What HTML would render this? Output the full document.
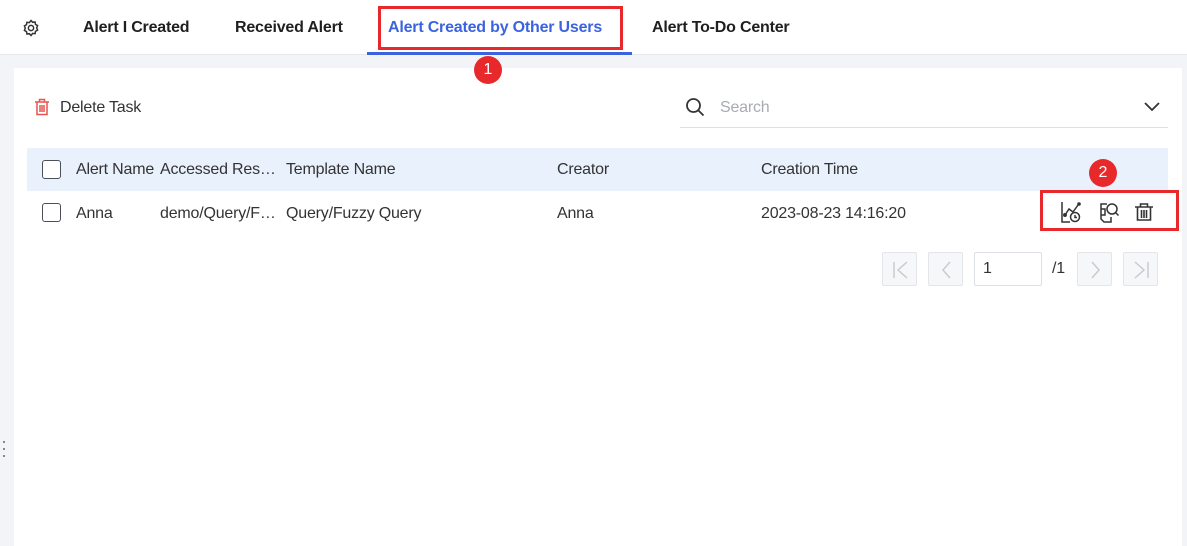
<!DOCTYPE html>
<html><head><meta charset="utf-8"><style>
*{box-sizing:border-box;margin:0;padding:0}
body{width:1187px;height:546px;overflow:hidden;background:#f3f4f7;font-family:"Liberation Sans",Arial,sans-serif;position:relative;color:#333}
.nav{position:absolute;left:0;top:0;width:1187px;height:55px;background:#fff;border-bottom:1px solid #e6e8ee}
.tab{position:absolute;top:19px;font-size:16px;font-weight:bold;color:#1f1f1f;letter-spacing:-0.2px}
.card{position:absolute;left:14px;top:68px;width:1168px;height:478px;background:#fff}
.abs{position:absolute}
.cb{position:absolute;width:19px;height:19px;border:1.5px solid #4a4f5a;border-radius:3px;background:#fff}
.t{position:absolute;font-size:16px;color:#333;white-space:nowrap;letter-spacing:-0.2px}
.pbtn{position:absolute;top:184px;width:35px;height:34px;border:1px solid #e3e5ea;border-radius:2px;background:#f6f7f9}
.badge{position:absolute;z-index:5;width:28px;height:28px;border-radius:50%;background:#e8292c;color:#fff;font-size:16px;text-align:center;line-height:28px}
</style></head><body>
<div class="nav">
<svg class="abs" style="left:22px;top:19px" width="18" height="18" viewBox="0 0 24 24" fill="none" stroke="#333" stroke-width="2"><path d="M12 2l2.2 2.4 3.2-.4.6 3.2 2.8 1.6-1.2 3 1.2 3-2.8 1.6-.6 3.2-3.2-.4L12 22l-2.2-2.4-3.2.4-.6-3.2L3.2 15.2l1.2-3-1.2-3L6 7.6l.6-3.2 3.2.4z"/><circle cx="12" cy="12" r="3.5"/></svg>
<div class="tab" style="left:83px">Alert I Created</div>
<div class="tab" style="left:235px">Received Alert</div>
<div class="tab" style="left:388px;color:#3b63e0">Alert Created by Other Users</div>
<div class="tab" style="left:652px">Alert To-Do Center</div>
<div class="abs" style="left:367px;top:52px;width:265px;height:3px;background:#3b63e0"></div>
<div class="abs" style="left:378px;top:6px;width:245px;height:44px;border:3px solid #e8292c"></div>
</div>
<div class="badge" style="left:474px;top:56px">1</div>
<div class="card">
<svg class="abs" style="left:20px;top:30px" width="16" height="18" viewBox="0 0 16 18" fill="none" stroke="#e8524f" stroke-width="1.5"><path d="M1 4h14M5.5 4V1.5h5V4M3 4v12.5h10V4M6 7v7M8 7v7M10 7v7"/></svg>
<div class="t" style="left:46px;top:31px">Delete Task</div>
<svg class="abs" style="left:671px;top:29px" width="20" height="20" viewBox="0 0 20 20" fill="none" stroke="#333" stroke-width="1.8"><circle cx="8.5" cy="8.5" r="6.5"/><path d="M13.5 13.5l5 5"/></svg>
<div class="t" style="left:706px;top:31px;color:#a8abb2">Search</div>
<svg class="abs" style="left:1130px;top:34px" width="16" height="10" viewBox="0 0 16 10" fill="none" stroke="#333" stroke-width="1.8"><path d="M1 1l7 7 7-7"/></svg>
<div class="abs" style="left:666px;top:59px;width:488px;height:1px;background:#dcdfe6"></div>
<div class="abs" style="left:13px;top:80px;width:1141px;height:43px;background:#e9f1fd"></div>
<div class="cb" style="left:28px;top:92px"></div>
<div class="t" style="left:62px;top:93px">Alert Name</div>
<div class="t" style="left:146px;top:93px">Accessed Res…</div>
<div class="t" style="left:272px;top:93px">Template Name</div>
<div class="t" style="left:543px;top:93px">Creator</div>
<div class="t" style="left:747px;top:93px">Creation Time</div>
<div class="cb" style="left:28px;top:135px"></div>
<div class="t" style="left:62px;top:137px">Anna</div>
<div class="t" style="left:146px;top:137px">demo/Query/F…</div>
<div class="t" style="left:272px;top:137px">Query/Fuzzy Query</div>
<div class="t" style="left:543px;top:137px">Anna</div>
<div class="t" style="left:747px;top:137px">2023-08-23 14:16:20</div>
<svg class="abs" style="left:1046px;top:133px" width="24" height="22" viewBox="0 0 24 22" fill="none" stroke="#333" stroke-width="1.5"><path d="M2 1v20h8"/><path d="M5 14l4-6 4 3" /><circle cx="5" cy="14" r="1.2" fill="#333"/><circle cx="19" cy="3" r="1.8" fill="#333" stroke="none"/><path d="M13 11l5-7"/><circle cx="15" cy="16" r="4.5"/><path d="M15 14v2.5h2"/></svg>
<svg class="abs" style="left:1084px;top:133px" width="22" height="22" viewBox="0 0 22 22" fill="none" stroke="#333" stroke-width="1.5"><path d="M9 3H3v15l3 3h7v-5"/><path d="M3 8h4v6H3"/><circle cx="14" cy="8" r="5"/><path d="M17.5 11.5l3 3"/></svg>
<svg class="abs" style="left:1120px;top:134px" width="20" height="20" viewBox="0 0 20 20" fill="none" stroke="#333" stroke-width="1.6"><path d="M1 5h18M6.5 5V2h7v3M3.5 5v13h13V5M7.5 8v8M10 8v8M12.5 8v8"/></svg>
<div class="abs" style="left:1026px;top:122px;width:139px;height:41px;border:3px solid #e8292c"></div>
<div class="badge" style="left:1075px;top:91px">2</div>
<div class="pbtn" style="left:868px"><svg width="35" height="34" viewBox="0 0 35 34" fill="none" stroke="#c8cbd2" stroke-width="1.5"><path d="M11 9v16M24 9l-9 8 9 8"/></svg></div>
<div class="pbtn" style="left:914px"><svg width="35" height="34" viewBox="0 0 35 34" fill="none" stroke="#c8cbd2" stroke-width="1.5"><path d="M21 9l-7 8 7 8"/></svg></div>
<div class="abs" style="left:960px;top:184px;width:68px;height:34px;border:1px solid #dcdfe6;border-radius:2px"></div>
<div class="t" style="left:969px;top:192px">1</div>
<div class="t" style="left:1038px;top:192px">/1</div>
<div class="pbtn" style="left:1063px"><svg width="35" height="34" viewBox="0 0 35 34" fill="none" stroke="#c8cbd2" stroke-width="1.5"><path d="M14 9l7 8-7 8"/></svg></div>
<div class="pbtn" style="left:1109px"><svg width="35" height="34" viewBox="0 0 35 34" fill="none" stroke="#c8cbd2" stroke-width="1.5"><path d="M11 9l9 8-9 8M24 9v16"/></svg></div>
</div>
<div class="abs" style="left:3px;top:441px;width:3px;height:20px;font-size:0">
<div style="width:2px;height:2px;background:#888;margin-bottom:5px"></div><div style="width:2px;height:2px;background:#888;margin-bottom:5px"></div><div style="width:2px;height:2px;background:#888"></div></div>
</body></html>
